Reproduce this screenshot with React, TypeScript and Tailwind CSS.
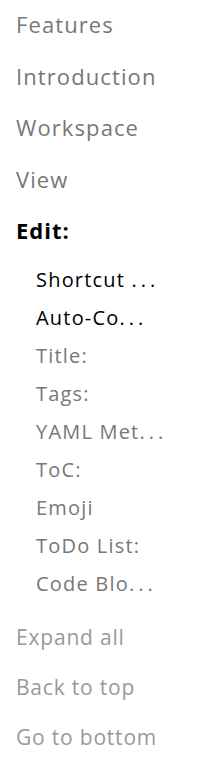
const topItems = ['Features', 'Introduction', 'Workspace', 'View']

// truncated labels, as they show in the narrow sidebar
const subItems: { label: string; cut?: boolean; active?: boolean }[] = [
  { label: 'Shortcut ', cut: true, active: true },
  { label: 'Auto-Co', cut: true, active: true },
  { label: 'Title:' },
  { label: 'Tags:' },
  { label: 'YAML Met', cut: true },
  { label: 'ToC:' },
  { label: 'Emoji' },
  { label: 'ToDo List:' },
  { label: 'Code Blo', cut: true },
]

const footerItems = ['Expand all', 'Back to top', 'Go to bottom']

export default function App() {
  return (
    <nav className="w-[222px] h-[762px] bg-white font-['Open_Sans','Noto_Sans',sans-serif] overflow-hidden">
      <ul className="pl-4 pt-[6px]">
        {topItems.map((item) => (
          <li key={item} className="h-[51.5px] leading-[36px] text-[22px] tracking-[1.1px] text-[#777777]">
            {item}
          </li>
        ))}
        <li>
          <div className="h-[36px] leading-[36px] text-[22px] tracking-[1px] font-bold text-black">Edit:</div>
          <ul className="pl-5 pt-[13px]">
            {subItems.map((s) => (
              <li
                key={s.label}
                className={`h-[38px] leading-[38px] text-[20px] tracking-[1.2px] whitespace-nowrap ${
                  s.active ? 'text-black' : 'text-[#777777]'
                }`}
              >
                {s.label}
                {s.cut && <span className="tracking-[4px]">...</span>}
              </li>
            ))}
          </ul>
        </li>
      </ul>
      <ul className="pl-4 pt-[16px]">
        {footerItems.map((item) => (
          <li key={item} className="h-[50px] leading-[36px] text-[21px] tracking-[0.8px] text-[#999999]">
            {item}
          </li>
        ))}
      </ul>
    </nav>
  )
}
